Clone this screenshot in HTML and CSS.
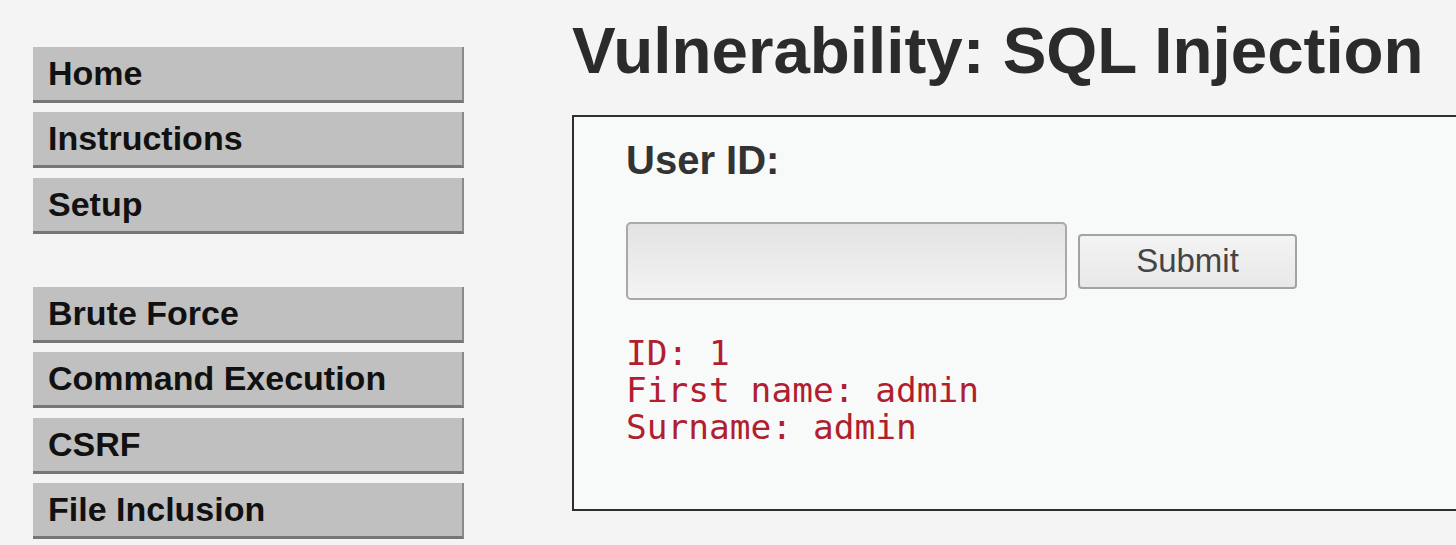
FILE: index.html
```
<!DOCTYPE html>
<html>
<head>
<meta charset="utf-8">
<title>Vulnerability: SQL Injection</title>
<link rel="stylesheet" href="styles.css">
</head>
<body>
<div class="page">
  <nav class="menu">
    <ul class="menu-group">
      <li class="menu-item">Home</li>
      <li class="menu-item">Instructions</li>
      <li class="menu-item">Setup</li>
    </ul>
    <ul class="menu-group">
      <li class="menu-item">Brute Force</li>
      <li class="menu-item">Command Execution</li>
      <li class="menu-item">CSRF</li>
      <li class="menu-item">File Inclusion</li>
    </ul>
  </nav>
  <main class="main">
    <h1 class="title">Vulnerability: SQL Injection</h1>
    <div class="vuln-box">
      <h2 class="label">User ID:</h2>
      <div class="form-row">
        <input class="text-input" type="text">
        <button class="submit-btn" type="button">Submit</button>
      </div>
      <pre class="result">ID: 1
First name: admin
Surname: admin</pre>
    </div>
  </main>
</div>
</body>
</html>
```
FILE: styles.css
```
html, body {
  margin: 0;
  padding: 0;
  background: #f4f4f4;
  overflow: hidden;
}
body {
  font-family: "Liberation Sans", Arial, sans-serif;
  width: 1456px;
  height: 545px;
}
.page {
  display: flex;
  padding-left: 33px;
}
.menu {
  width: 431px;
  flex: none;
  padding-top: 47px;
}
.menu-group {
  list-style: none;
  margin: 0 0 53px 0;
  padding: 0;
  display: flex;
  flex-direction: column;
  gap: 9.4px;
}
.menu-group:last-child {
  margin-bottom: 0;
}
.menu-item {
  height: 53px;
  line-height: 53px;
  background: #c0c0c0;
  border-bottom: 3px solid #767676;
  border-right: 2px solid #8a8a8a;
  padding-left: 15px;
  font-size: 34px;
  font-weight: bold;
  color: #111;
  white-space: nowrap;
}
.main {
  margin-left: 108px;
  flex: 1;
  min-width: 0;
}
.title {
  margin: 14px 0 27px 0;
  font-size: 65.5px;
  line-height: 74px;
  font-weight: bold;
  color: #2b2b2b;
  white-space: nowrap;
}
.vuln-box {
  border: 2px solid #2e2e2e;
  border-right: none;
  background: #f8f9f9;
  padding: 19px 0 61px 52px;
  height: 312px;
}
.label {
  margin: 0 0 38px 0;
  font-size: 40px;
  line-height: 48px;
  font-weight: bold;
  color: #333;
}
.form-row {
  display: flex;
  align-items: center;
  gap: 11px;
}
.text-input {
  box-sizing: border-box;
  width: 441px;
  height: 78px;
  border: 2px solid #a9a9a9;
  border-radius: 5px;
  background: linear-gradient(#e3e3e3, #f3f3f3);
  margin: 0;
}
.submit-btn {
  box-sizing: border-box;
  width: 219px;
  height: 55px;
  border: 2px solid #a3a3a3;
  border-radius: 4px;
  background: linear-gradient(#f3f3f3, #e8e8e8);
  font-family: "Liberation Sans", Arial, sans-serif;
  font-size: 33px;
  color: #444;
  padding: 0;
  margin: 0;
}
.result {
  margin: 35px 0 0 0;
  font-family: "DejaVu Sans Mono", monospace;
  font-size: 34.5px;
  line-height: 37px;
  color: #b01e30;
}
```
